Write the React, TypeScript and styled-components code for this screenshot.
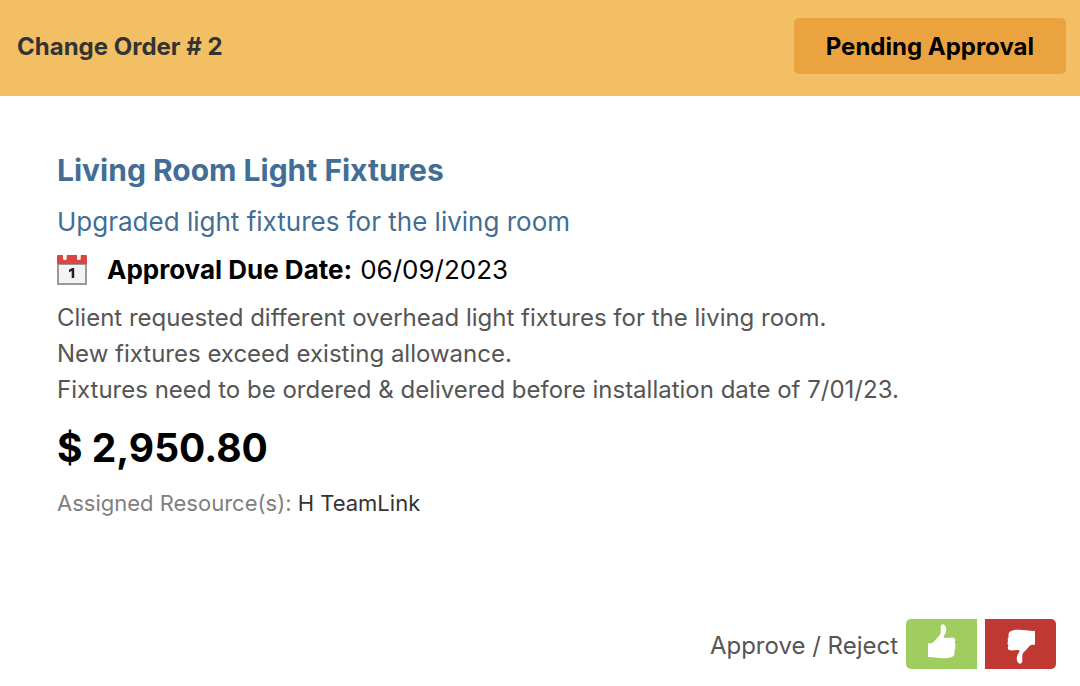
import React from 'react';
import styled, { createGlobalStyle } from 'styled-components';

const GlobalStyle = createGlobalStyle`
  * { box-sizing: border-box; }
  body { margin: 0; background: #fff; color: #000; font-family: Inter, "Liberation Sans", sans-serif; }
  h1, h2, p { margin: 0; }
`;
const Card = styled.main`
  display: flex; flex-direction: column; min-height: 100vh;
`;
const Header = styled.header`
  display: flex; justify-content: space-between; align-items: center;
  padding: 18px 14px 22px 17px; background: #f2bf65;
`;
const OrderNumber = styled.h1`
  padding-top: 2px; font-size: 24px; line-height: 32px; font-weight: 700; color: #333;
`;
const Status = styled.span`
  padding: 13px 32px 11px; border-radius: 5px; background: #eba340;
  font-size: 24px; line-height: 32px; font-weight: 700;
`;
const Body = styled.section`
  display: flex; flex-direction: column; flex: 1; padding: 52px 57px 0;
`;
const Title = styled.h2`
  font-size: 30px; line-height: 44px; font-weight: 700; color: #426e96;
`;
const Summary = styled.p`
  margin-top: 8px; font-size: 26px; line-height: 44px; color: #426e96;
`;
const DueDate = styled.p`
  display: flex; align-items: center; margin-top: 4px; font-size: 26px; line-height: 44px;
  svg { margin-right: 20px; }
  strong { font-weight: 700; margin-right: 8px; }
`;
const Description = styled.p`
  margin-top: 8px; font-size: 24px; line-height: 36px; color: #555;
`;
const Price = styled.p`
  margin-top: 16px; font-size: 39px; line-height: 48px; font-weight: 700;
`;
const Assigned = styled.p`
  margin-top: 15px; font-size: 22px; line-height: 32px; color: #808080;
  span { color: #333; }
`;
const Footer = styled.footer`
  display: flex; justify-content: flex-end; align-items: center; gap: 8px;
  padding: 0 24px 17px;
`;
const FooterLabel = styled.span`
  padding-top: 4px; font-size: 24px; line-height: 32px; color: #555;
`;
const VoteButton = styled.button<{ $kind: 'approve' | 'reject' }>`
  display: flex; align-items: flex-start; justify-content: center;
  width: 71px; height: 50px; border: 0; color: #fff; cursor: pointer;
  padding: ${p => (p.$kind === 'approve' ? '5px 0 0' : '10px 0 0')};
  border-radius: ${p => (p.$kind === 'approve' ? '5px 0 0 5px' : '0 5px 5px 0')};
  background: ${p => (p.$kind === 'approve' ? '#a0cd60' : '#bf3831')};
`;
const CalendarIcon = () => (
  <svg width="30" height="30" viewBox="0 0 30 30" aria-hidden="true">
    <path d="M1 9h28v20H1z" fill="#f3f3f3" stroke="#999" strokeWidth="2" />
    <path d="M1 0H6V4q0 1 1.800 1T9.700 4V0H20V4q0 1 1.900 1T23.700 4V0H29q1 0 1 1V9H0V1q0-1 1-1z" fill="#db4640" />
    <path d="M12 14.800l3.200-1.800h2V23h-2.500v-6.900l-2.700 1.200z" fill="#222" />
  </svg>
);
const ThumbIcon = ({ down = false }: { down?: boolean }) => (
  <svg width="28" height="35" viewBox="0 0 28 35" fill="currentColor" aria-hidden="true">
    <path
      transform={down ? 'rotate(180 14 17.500)' : undefined}
      d="M0 19.300H3.500C6.500 18 8 14.500 10.500 12.500C13.700 10 12.500 6 12.700 2.500C13.200.3 15.200-.3 16.500 1C18.700 3 18.600 7 17.300 9.500C16.500 11 15.500 12 15.500 13.500C18 14.500 21 13.300 25 13.700Q27.300 14 27.300 16Q27.300 17.500 26.500 18.200Q28.200 20 27 23Q27.800 25 26.300 27.300C27 30 26 32 24 33C20 34.800 13.500 34.300 9 33.800Q5 33 0 33Z"
    />
  </svg>
);

export default function App() {
  return (
    <>
      <GlobalStyle />
      <Card>
        <Header>
          <OrderNumber>Change Order # 2</OrderNumber>
          <Status>Pending Approval</Status>
        </Header>
        <Body>
          <Title>Living Room Light Fixtures</Title>
          <Summary>Upgraded light fixtures for the living room</Summary>
          <DueDate><CalendarIcon /><strong>Approval Due Date:</strong> 06/09/2023</DueDate>
          <Description>
            Client requested different overhead light fixtures for the living room.<br />
            New fixtures exceed existing allowance.<br />
            Fixtures need to be ordered &amp; delivered before installation date of 7/01/23.
          </Description>
          <Price>$ 2,950.80</Price>
          <Assigned>Assigned Resource(s): <span>H TeamLink</span></Assigned>
        </Body>
        <Footer>
          <FooterLabel>Approve / Reject</FooterLabel>
          <VoteButton type="button" $kind="approve" aria-label="Approve"><ThumbIcon /></VoteButton>
          <VoteButton type="button" $kind="reject" aria-label="Reject"><ThumbIcon down /></VoteButton>
        </Footer>
      </Card>
    </>
  );
}
